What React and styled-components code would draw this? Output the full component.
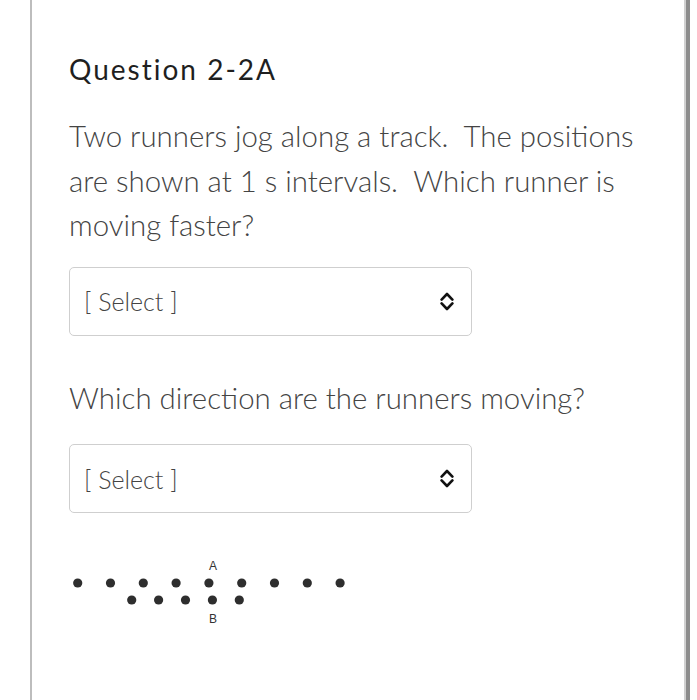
import React from "react";
import styled, { createGlobalStyle } from "styled-components";

const Global = createGlobalStyle`
  html, body { margin: 0; padding: 0; background: #ffffff; }
  body { font-family: Lato, "Open Sans", sans-serif; }
`;

const Page = styled.div`
  width: 697px;
  height: 700px;
  overflow: hidden;
  background: #fff;
  display: flex;
`;

const Card = styled.div`
  margin-left: 30px;
  width: 660px;
  height: 700px;
  border-left: 2px solid #bdbdbd;
  border-right: 4px solid #8c8c8c;
  box-shadow: inset -2px 0 0 #d0d0d0;
  padding: 51px 0 0 37px;
  box-sizing: border-box;
`;

const Title = styled.h2`
  margin: 0;
  font-family: Lato, sans-serif;
  font-weight: 400;
  font-size: 28px;
  letter-spacing: 2px;
  line-height: 36px;
  color: #1f1f1f;
`;

const Para = styled.p`
  margin: ${(p) => p.$mt || 0}px 0 0;
  font-family: Lato, sans-serif;
  font-weight: 300;
  font-size: 29.4px;
  line-height: 44.5px;
  color: #444;
  width: 580px;
  white-space: pre-wrap;
`;

const SelectBox = styled.div`
  margin-top: ${(p) => p.$mt || 0}px;
  width: 403px;
  height: 69px;
  box-sizing: border-box;
  border: 1.5px solid #cfcfcf;
  border-radius: 5px;
  display: flex;
  align-items: center;
  justify-content: space-between;
  padding: 0 17px 0 14px;
`;

const SelectText = styled.span`
  font-family: Lato, sans-serif;
  font-weight: 300;
  font-size: 25px;
  color: #444;
`;

const Diagram = styled.svg`
  display: block;
  margin-top: 39px;
  margin-left: -1px;
`;

const Chevrons = () => (
  <svg width="14" height="19" viewBox="0 0 14 19">
    <path d="M1.6 7.6 L7 2 L12.4 7.6" fill="none" stroke="#111" strokeWidth="2.6" strokeLinecap="round" strokeLinejoin="round" />
    <path d="M1.6 11.4 L7 17 L12.4 11.4" fill="none" stroke="#111" strokeWidth="2.6" strokeLinecap="round" strokeLinejoin="round" />
  </svg>
);

const Select = ({ mt }) => (
  <SelectBox $mt={mt}>
    <SelectText>[ Select ]</SelectText>
    <Chevrons />
  </SelectBox>
);

const top = Array.from({ length: 9 }, (_, i) => 77.7 + 32.8 * i);
const bottom = Array.from({ length: 5 }, (_, i) => 131.7 + 26.9 * i);

const Dots = () => (
  <Diagram width="300" height="75" viewBox="68 553 300 75">
    {top.map((x, i) => (
      <circle key={"t" + i} cx={x} cy={584} r={4.6} fill="#2e2e2e" />
    ))}
    {bottom.map((x, i) => (
      <circle key={"b" + i} cx={x} cy={601} r={4.6} fill="#2e2e2e" />
    ))}
    <text x="213" y="571" fontSize="12" fontFamily="Liberation Sans, Arial, sans-serif" textAnchor="middle" fill="#333">A</text>
    <text x="213" y="624" fontSize="12" fontFamily="Liberation Sans, Arial, sans-serif" textAnchor="middle" fill="#333">B</text>
  </Diagram>
);

export default function App() {
  return (
    <>
      <Global />
      <Page>
        <Card>
          <Title>Question 2-2A</Title>
          <Para $mt={27}>{"Two runners jog along a track.  The positions are shown at 1 s intervals.  Which runner is moving faster?"}</Para>
          <Select mt={19} />
          <Para $mt={40}>Which direction are the runners moving?</Para>
          <Select mt={24} />
          <Dots />
        </Card>
      </Page>
    </>
  );
}
